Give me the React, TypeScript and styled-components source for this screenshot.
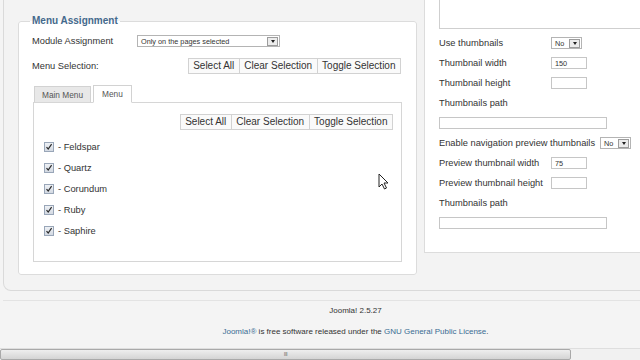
import React from 'react';
import styled, { createGlobalStyle } from 'styled-components';

const GlobalStyle = createGlobalStyle`
    html, body {
        margin: 0;
        padding: 0;
        overflow: hidden;
        background: #f4f4f4;
    }
    body {
        font-family: "Liberation Sans", Arial, sans-serif;
        color: #333;
    }
`

const menuItems = ['Feldspar', 'Quartz', 'Corundum', 'Ruby', 'Saphire'];

type FieldRowType = {
    label: string
    kind: 'select' | 'input' | 'path' | 'label'
    value?: string
}

const thumbFields: FieldRowType[] = [
    { label: 'Use thumbnails', kind: 'select', value: 'No' },
    { label: 'Thumbnail width', kind: 'input', value: '150' },
    { label: 'Thumbnail height', kind: 'input', value: '' },
    { label: 'Thumbnails path', kind: 'label' },
    { label: '', kind: 'path' },
    { label: 'Enable navigation preview thumbnails', kind: 'select', value: 'No' },
    { label: 'Preview thumbnail width', kind: 'input', value: '75' },
    { label: 'Preview thumbnail height', kind: 'input', value: '' },
    { label: 'Thumbnails path', kind: 'label' },
    { label: '', kind: 'path' },
];

const SelectionButtons = () => (
    <ButtonGroup>
        <Button>Select All</Button>
        <Button>Clear Selection</Button>
        <Button>Toggle Selection</Button>
    </ButtonGroup>
);

const FakeSelect = (props: { width: number, value: string }) => (
    <SelectBox $w={props.width}>
        <span>{props.value}</span>
        <SelectArrow />
    </SelectBox>
);

const Cursor = () => (
    <CursorWrap>
        <svg width="11" height="17" viewBox="0 0 11 17">
            <path d="M1 1 L1 14 L4 11 L6.5 16 L8.5 15 L6 10 L10 10 Z" fill="#fff" stroke="#222" strokeWidth="1" strokeLinejoin="round"/>
        </svg>
    </CursorWrap>
);

export default function App() {
    return (
        <>
            <GlobalStyle/>
            <Page>
                <Main>
                    <Fieldset>
                        <Legend>Menu Assignment</Legend>
                        <FormRow>
                            <Label>Module Assignment</Label>
                            <FakeSelect width={143} value="Only on the pages selected"/>
                        </FormRow>
                        <FormRow $mt={9}>
                            <Label>Menu Selection:</Label>
                            <RightSide $pr={1}>
                                <SelectionButtons/>
                            </RightSide>
                        </FormRow>
                        <TabBar>
                            <Tab>Main Menu</Tab>
                            <Tab $active>Menu</Tab>
                        </TabBar>
                        <TabPanel>
                            <InnerButtons>
                                <SelectionButtons/>
                            </InnerButtons>
                            <CheckList>
                                {menuItems.map(item => (
                                    <CheckRow key={item}>
                                        <CheckBox>
                                            <svg width="8" height="8" viewBox="0 0 8 8">
                                                <path d="M1.5 4.2 L3.2 6 L6.6 1.2" fill="none" stroke="#2b2b2b" strokeWidth="1.2"/>
                                            </svg>
                                        </CheckBox>
                                        <span>- {item}</span>
                                    </CheckRow>
                                ))}
                            </CheckList>
                            <Cursor/>
                        </TabPanel>
                    </Fieldset>

                    <SidePanel>
                        <TextArea/>
                        <FieldList>
                            {thumbFields.map((f, i) => (
                                <FieldRow key={i}>
                                    {f.kind === 'path' ? (
                                        <PathInput readOnly value=""/>
                                    ) : (
                                        <>
                                            <SideLabel>{f.label}</SideLabel>
                                            {f.kind === 'select' && <FakeSelect width={31} value={f.value || ''}/>}
                                            {f.kind === 'input' && <SmallInput readOnly value={f.value}/>}
                                        </>
                                    )}
                                </FieldRow>
                            ))}
                        </FieldList>
                    </SidePanel>
                </Main>

                <Footer>
                    <FooterLine>Joomla! 2.5.27</FooterLine>
                    <FooterLine $mt={9}>
                        <FooterLink>Joomla!®</FooterLink> is free software released under the{' '}
                        <FooterLink>GNU General Public License</FooterLink>.
                    </FooterLine>
                </Footer>
            </Page>
            <ScrollBar>
                <ScrollThumb>III</ScrollThumb>
            </ScrollBar>
        </>
    );
}

const Page = styled.div`
    width: 708px;
    height: 360px;
    padding-left: 3px;
    box-sizing: border-box;
`

const Main = styled.div`
    display: flex;
    align-items: flex-start;
    gap: 7px;
    width: 702px;
    box-sizing: border-box;
    border: 1px solid #dadada;
    border-top: none;
    border-radius: 0 0 8px 8px;
    padding: 0 0 15px 14px;
    background: #f3f3f3;
`

const Fieldset = styled.fieldset`
    margin: 15px 0 0;
    width: 399px;
    min-width: 0;
    box-sizing: border-box;
    border: 1px solid #dcdcdc;
    border-radius: 3px;
    padding: 6px 14px 12px 13px;
    background: #fff;
`

const Legend = styled.legend`
    padding: 0 2px;
    margin-left: -2px;
    font-size: 10px;
    line-height: 12px;
    font-weight: bold;
    color: #44698c;
`

const FormRow = styled.div<{ $mt?: number }>`
    display: flex;
    align-items: center;
    height: 16px;
    margin-top: ${p => p.$mt || 0}px;
`

const Label = styled.span`
    width: 105px;
    flex-shrink: 0;
    font-size: 9.3px;
    color: #333;
`

const RightSide = styled.div<{ $pr?: number }>`
    margin-left: auto;
    padding-right: ${p => p.$pr || 0}px;
`

const ButtonGroup = styled.div`
    display: flex;
`

const Button = styled.span`
    height: 16px;
    line-height: 14px;
    box-sizing: border-box;
    padding: 0 4.5px;
    border: 1px solid #d2d2d2;
    margin-left: -1px;
    background: #fafafa;
    font-size: 10px;
    color: #333;
    white-space: nowrap;
`

const SelectBox = styled.div<{ $w: number }>`
    width: ${p => p.$w}px;
    height: 12px;
    box-sizing: border-box;
    border: 1px solid #b4b4b4;
    background: #fff;
    display: flex;
    align-items: center;
    justify-content: space-between;
    padding: 0 1px 0 3px;
    font-size: 7.3px;
    color: #333;
    white-space: nowrap;
`

const SelectArrow = styled.span`
    width: 11px;
    height: 9px;
    box-sizing: border-box;
    border: 1px solid #9c9c9c;
    background: #ececec;
    display: flex;
    align-items: center;
    justify-content: center;

    &::after {
        content: '';
        border-left: 2.5px solid transparent;
        border-right: 2.5px solid transparent;
        border-top: 3px solid #222;
    }
`

const TabBar = styled.div`
    display: flex;
    align-items: flex-end;
    gap: 2px;
    height: 16px;
    margin: 12px 0 0 2px;
    position: relative;
    z-index: 1;
`

const Tab = styled.span<{ $active?: boolean }>`
    height: ${p => p.$active ? 18 : 16}px;
    margin-bottom: ${p => p.$active ? -1 : 0}px;
    box-sizing: border-box;
    padding: 0 ${p => p.$active ? 8 : 7}px;
    display: flex;
    align-items: center;
    border: 1px solid #d2d2d2;
    border-bottom: ${p => p.$active ? '1px solid #fff' : 'none'};
    background: ${p => p.$active ? '#fff' : '#e8e8e8'};
    font-size: 8.3px;
    color: #555;
`

const TabPanel = styled.div`
    position: relative;
    margin-left: 1px;
    height: 160px;
    box-sizing: border-box;
    border: 1px solid #d6d6d6;
    padding: 11px 8px 0 10px;
`

const InnerButtons = styled.div`
    display: flex;
    justify-content: flex-end;
`

const CheckList = styled.div`
    margin-top: 6px;
`

const CheckRow = styled.div`
    display: flex;
    align-items: center;
    gap: 4px;
    height: 21px;
    font-size: 9.3px;
    color: #333;
`

const CheckBox = styled.span`
    width: 10px;
    height: 10px;
    box-sizing: border-box;
    border: 1px solid #99a6b8;
    background: linear-gradient(#eef1f5, #d3d9e2);
    display: flex;
    align-items: center;
    justify-content: center;
`

const CursorWrap = styled.div`
    position: absolute;
    left: 344px;
    top: 70px;
    line-height: 0;
`

const SidePanel = styled.div`
    flex: 1;
    align-self: flex-start;
    background: #fff;
    border: 1px solid #dcdcdc;
    border-top: none;
    padding: 0 0 19px 14px;
`

const TextArea = styled.div`
    width: 260px;
    height: 29px;
    box-sizing: border-box;
    border: 1px solid #cfcfcf;
    border-top: none;
`

const FieldList = styled.div`
    margin-top: 4px;
`

const FieldRow = styled.div`
    display: flex;
    align-items: center;
    height: 20px;
`

const SideLabel = styled.span`
    min-width: 112px;
    box-sizing: border-box;
    padding-right: 5px;
    font-size: 9.3px;
    color: #333;
    white-space: nowrap;
`

const SmallInput = styled.input`
    width: 36px;
    height: 12px;
    box-sizing: border-box;
    border: 1px solid #c6c6c6;
    padding: 0 3px;
    margin: 0;
    font-family: inherit;
    font-size: 7.3px;
    color: #333;
    outline: none;
`

const PathInput = styled(SmallInput)`
    width: 168px;
`

const Footer = styled.div`
    margin-top: 9px;
    border-top: 1px solid #e3e3e3;
    padding-top: 4px;
    text-align: center;
`

const FooterLine = styled.div<{ $mt?: number }>`
    margin-top: ${p => p.$mt || 0}px;
    font-size: 8px;
    line-height: 12px;
    color: #333;
`

const FooterLink = styled.span`
    color: #3a6c93;
`

const ScrollBar = styled.div`
    position: fixed;
    left: 0;
    bottom: 0;
    width: 640px;
    height: 11px;
    background: #f1f1f1;
    border-top: 1px solid #dedede;
`

const ScrollThumb = styled.div`
    width: 571px;
    height: 100%;
    box-sizing: border-box;
    border: 1px solid #a9a9a9;
    border-radius: 2px;
    background: linear-gradient(#eeeeee, #d4d4d4);
    font-size: 6px;
    line-height: 9px;
    text-align: center;
    color: #777;
    letter-spacing: -0.5px;
`
